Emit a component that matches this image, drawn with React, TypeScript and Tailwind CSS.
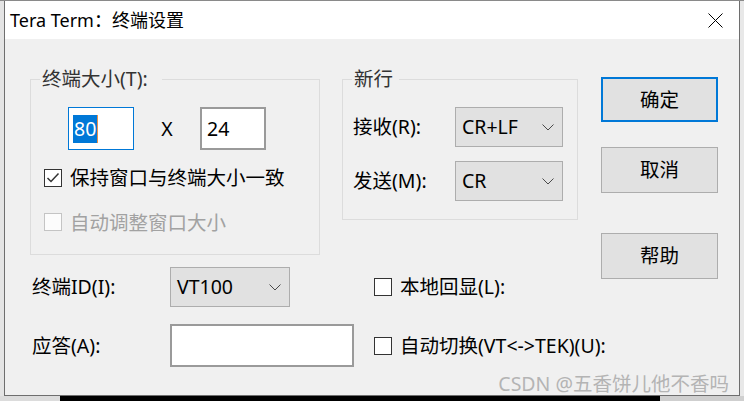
import type { ReactNode } from 'react';

const FONT = "font-['Noto_Sans','Noto_Sans_CJK_SC',sans-serif]";

function Chevron() {
  return (
    <svg width="12" height="7" viewBox="0 0 12 7" className="shrink-0">
      <polyline points="0.5,0.5 6,6 11.5,0.5" fill="none" stroke="#4a4a4a" strokeWidth="1" />
    </svg>
  );
}

function Select({ value, className }: { value: string; className: string }) {
  return (
    <div
      className={`flex items-center justify-between bg-[#e1e1e1] border border-[#adadad] pl-[6px] pr-[8px] text-[19.5px] text-black ${className}`}
    >
      <span className="leading-none">{value}</span>
      <Chevron />
    </div>
  );
}

function CheckBox({ checked, disabled, children }: { checked?: boolean; disabled?: boolean; children: ReactNode }) {
  return (
    <div className="flex items-center gap-[8px] whitespace-nowrap">
      <div
        className={
          disabled
            ? 'shrink-0 w-[18px] h-[18px] border border-[#c4c4c4] bg-[#fcfcfc]'
            : 'shrink-0 w-[18px] h-[18px] border border-[#333] bg-white'
        }
      >
        {checked && (
          <svg width="16" height="16" viewBox="0 0 16 16">
            <polyline points="2.5,8 6,11.5 13.5,3.5" fill="none" stroke="#333" strokeWidth="1.5" />
          </svg>
        )}
      </div>
      <span className={disabled ? 'text-[19.5px] leading-none text-[#a2a2a2]' : 'text-[19.5px] leading-none text-black'}>
        {children}
      </span>
    </div>
  );
}

function Button({ label, primary }: { label: string; primary?: boolean }) {
  return (
    <div
      className={
        primary
          ? 'w-[117px] h-[45px] flex items-center justify-center bg-[#e1e1e1] border-2 border-[#0078d7] text-[19.5px] text-black'
          : 'w-[117px] h-[46px] flex items-center justify-center bg-[#e1e1e1] border border-[#adadad] text-[19.5px] text-black'
      }
    >
      {label}
    </div>
  );
}

export default function App() {
  return (
    <div className={`w-[744px] h-[401px] overflow-hidden bg-[#dcdcdc] flex flex-col ${FONT}`}>
      <div className="h-px bg-[#8a8a8a]" />
      <div className="flex">
        <div className="w-[4px] bg-[#e4e4e4]" />
        {/* dialog window */}
        <div className="w-[736px] h-[395px] border-x border-b border-[#6e6e6e] flex flex-col relative">
          <div className="h-[38px] bg-white flex items-center justify-between pl-[5px] pr-[16px]">
            <span className="text-[18px] leading-none text-black">Tera Term：终端设置</span>
            <svg width="15" height="15" viewBox="0 0 15 15">
              <line x1="0.5" y1="0.5" x2="14.5" y2="14.5" stroke="#000" strokeWidth="1" />
              <line x1="14.5" y1="0.5" x2="0.5" y2="14.5" stroke="#000" strokeWidth="1" />
            </svg>
          </div>

          <div className="flex-1 bg-[#f0f0f0] pl-[25px] pt-[30px] relative">
            <div className="flex items-start">
              <div className="w-[548px] shrink-0">
                <div className="flex items-start">
                  {/* 终端大小 */}
                  <fieldset className="w-[290px] h-[186px] border border-[#dcdcdc]">
                    <legend className="ml-[9px] px-[2px] pr-[14px] text-[19.5px] leading-[20px] text-[#333]">终端大小(T):</legend>
                    <div className="flex items-center mt-[18px] ml-[37px]">
                      <div className="w-[66px] h-[43px] bg-white border border-[#0078d7] flex items-center pl-[4px]">
                        <span className="h-[28px] leading-[28px] bg-[#0078d7] text-white text-[19.5px] px-[1px]">80</span>
                        <span className="w-px h-[28px] bg-[#e8904a]" />
                      </div>
                      <span className="w-[66px] text-center text-[19.5px] text-black">X</span>
                      <div className="w-[66px] h-[43px] bg-white border-2 border-[#9a9a9a] flex items-center pl-[5px] text-[19.5px] text-black">
                        24
                      </div>
                    </div>
                    <div className="mt-[18px] ml-[13px]">
                      <CheckBox checked>保持窗口与终端大小一致</CheckBox>
                    </div>
                    <div className="mt-[25px] ml-[13px]">
                      <CheckBox disabled>自动调整窗口大小</CheckBox>
                    </div>
                  </fieldset>

                  {/* 新行 */}
                  <fieldset className="ml-[22px] w-[236px] h-[151px] border border-[#dcdcdc]">
                    <legend className="ml-[9px] px-[2px] pr-[6px] text-[19.5px] leading-[20px] text-[#333]">新行</legend>
                    <div className="flex items-center mt-[18px] ml-[10px]">
                      <span className="w-[102px] text-[19.5px] text-black leading-none">接收(R):</span>
                      <Select value="CR+LF" className="w-[108px] h-[40px]" />
                    </div>
                    <div className="flex items-center mt-[14px] ml-[10px]">
                      <span className="w-[102px] text-[19.5px] text-black leading-none">发送(M):</span>
                      <Select value="CR" className="w-[108px] h-[40px]" />
                    </div>
                  </fieldset>
                </div>

                <div className="mt-[12px] grid grid-cols-[140px_204px_204px] items-center gap-y-[17px]">
                  <span className="pl-[2px] text-[19.5px] text-black leading-none">终端ID(I):</span>
                  <Select value="VT100" className="w-[120px] h-[40px]" />
                  <CheckBox>本地回显(L):</CheckBox>

                  <span className="pl-[2px] text-[19.5px] text-black leading-none">应答(A):</span>
                  <div className="w-[184px] h-[43px] bg-white border-2 border-[#9a9a9a]" />
                  <CheckBox>自动切换(VT&lt;-&gt;TEK)(U):</CheckBox>
                </div>
              </div>

              <div className="ml-[23px] mt-[8px] flex flex-col">
                <Button label="确定" primary />
                <div className="mt-[25px]">
                  <Button label="取消" />
                </div>
                <div className="mt-[40px]">
                  <Button label="帮助" />
                </div>
              </div>
            </div>

            <span className="absolute right-[10px] bottom-[1px] text-[19.5px] leading-[21px] text-[#b4b4b4] whitespace-nowrap">
              CSDN @五香饼儿他不香吗
            </span>
          </div>
        </div>
        <div className="flex-1 bg-[#e8e8e8]" />
      </div>
      <div className="flex h-[5px]">
        <div className="w-[60px] bg-[#dcdcdc]" />
        <div className="w-[600px] bg-black" />
        <div className="flex-1 bg-[#cfcfcf]" />
      </div>
    </div>
  );
}
